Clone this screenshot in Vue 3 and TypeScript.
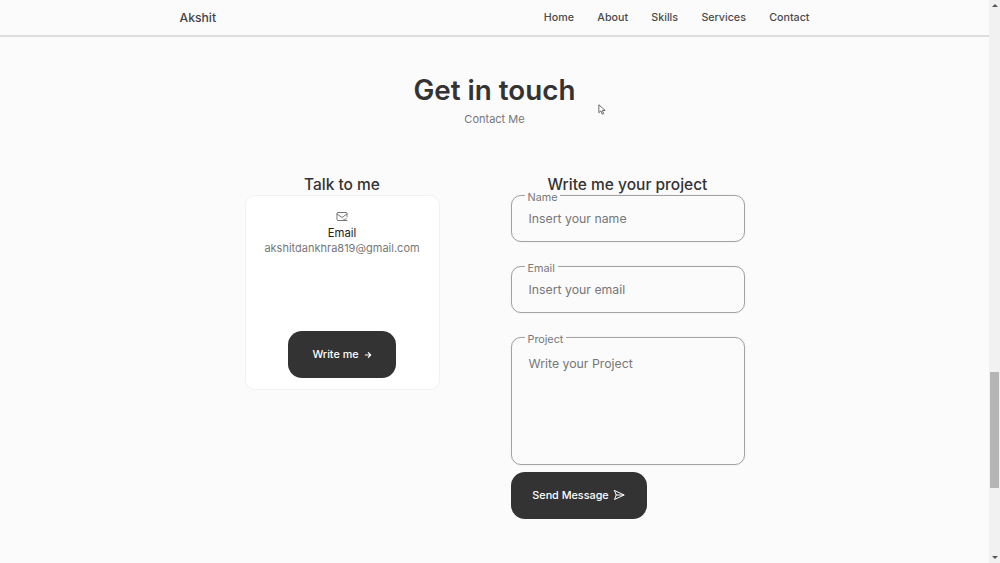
<script setup lang="ts">
const links: string[] = ['Home', 'About', 'Skills', 'Services', 'Contact']
</script>

<template>
  <div class="page">
    <div class="main">
      <header class="header">
        <nav class="nav">
          <a class="logo">Akshit</a>
          <ul class="menu">
            <li v-for="link in links" :key="link">{{ link }}</li>
          </ul>
        </nav>
      </header>

      <section class="section">
        <h1 class="title">Get in touch</h1>
        <p class="subtitle">Contact Me</p>

        <div class="columns">
          <div class="talk">
            <h2 class="col-title">Talk to me</h2>
            <div class="card">
              <svg class="mail" viewBox="0 0 24 20" fill="none" stroke="#666" stroke-width="1.8" stroke-linecap="round" stroke-linejoin="round">
                <path d="M22 10V4a2 2 0 0 0-2-2H4a2 2 0 0 0-2 2v12a2 2 0 0 0 2 2h18" />
                <path d="M2 5l10 7 10-7" />
                <path d="M15 15l2 2 4-4" />
              </svg>
              <h3 class="card-title">Email</h3>
              <span class="card-data">akshitdankhra819@gmail.com</span>
              <a class="btn write">
                Write me
                <svg class="arrow" viewBox="0 0 24 24" fill="none" stroke="#fff" stroke-width="3.4" stroke-linecap="round" stroke-linejoin="round">
                  <path d="M4 12h16M13 5l7 7-7 7" />
                </svg>
              </a>
            </div>
          </div>

          <div class="project">
            <h2 class="col-title">Write me your project</h2>
            <form class="form" @submit.prevent>
              <div class="field">
                <label class="label">Name</label>
                <input class="input" type="text" placeholder="Insert your name" />
              </div>
              <div class="field">
                <label class="label">Email</label>
                <input class="input" type="email" placeholder="Insert your email" />
              </div>
              <div class="field area">
                <label class="label">Project</label>
                <textarea class="input textarea" placeholder="Write your Project"></textarea>
              </div>
              <button class="btn send" type="submit">
                Send Message
                <svg class="plane" viewBox="0 0 24 24" fill="none" stroke="#fff" stroke-width="2" stroke-linecap="round" stroke-linejoin="round">
                  <path d="M3 3l19 9-19 9 3.5-9L3 3z" />
                  <path d="M6.5 12H22" />
                </svg>
              </button>
            </form>
          </div>
        </div>
      </section>

      <svg class="cursor" viewBox="0 0 10 14" fill="#fff" stroke="#444" stroke-width="1">
        <path d="M1 1v10l2.6-2.2L5.4 13l1.8-.8-1.8-4H9L1 1z" />
      </svg>
    </div>

    <aside class="scrollbar">
      <span class="tri up"></span>
      <span class="thumb"></span>
      <span class="tri down"></span>
    </aside>
  </div>
</template>

<style>
html, body {
  margin: 0;
  overflow: hidden;
  background: #fbfbfb;
}
</style>

<style scoped>
.page {
  display: flex;
  width: 1000px;
  height: 563px;
  overflow: hidden;
  background: #fbfbfb;
  font-family: Inter, "Noto Sans", sans-serif;
  color: #333;
}
.main {
  position: relative;
  flex: 1;
  min-width: 0;
}
.header {
  height: 35px;
  border-bottom: 2px solid #dedede;
}
.nav {
  display: flex;
  justify-content: space-between;
  align-items: center;
  width: 630px;
  height: 35px;
  margin: 0 auto;
}
.logo {
  font-size: 12.2px;
  font-weight: 500;
  color: #444;
}
.menu {
  display: flex;
  gap: 23.3px;
  margin: 0;
  padding: 0;
  list-style: none;
  font-size: 10.7px;
  font-weight: 500;
  color: #4a4a4a;
}
.section {
  display: flex;
  flex-direction: column;
  align-items: center;
}
.title {
  margin: 36px 0 0;
  font-size: 27.8px;
  line-height: 34px;
  font-weight: 600;
  color: #333;
}
.subtitle {
  margin: 2.5px 0 0;
  font-size: 11px;
  line-height: 18px;
  color: #777;
}
.columns {
  display: flex;
  gap: 71px;
  margin-top: 48px;
  align-items: flex-start;
}
.talk {
  width: 195px;
}
.project {
  width: 234px;
}
.col-title {
  margin: 0;
  height: 19px;
  font-size: 15.5px;
  line-height: 17px;
  font-weight: 500;
  text-align: center;
  color: #333;
}
.card {
  display: flex;
  flex-direction: column;
  align-items: center;
  box-sizing: border-box;
  height: 195px;
  padding-top: 15px;
  background: #fff;
  border: 1px solid #f1f1f1;
  border-radius: 10px;
}
.mail {
  width: 12px;
  height: 11px;
}
.card-title {
  margin: 4px 0 0;
  font-size: 11.3px;
  line-height: 15px;
  font-weight: 400;
  color: #222;
}
.card-data {
  font-size: 11px;
  line-height: 15px;
  white-space: nowrap;
  color: #777;
}
.btn {
  display: flex;
  align-items: center;
  justify-content: center;
  box-sizing: border-box;
  height: 47px;
  border: none;
  border-radius: 14px;
  background: #333;
  color: #fff;
  font-family: inherit;
  font-size: 10.8px;
  font-weight: 500;
}
.write {
  width: 108px;
  gap: 5px;
  margin-top: 75.5px;
}
.arrow {
  width: 8px;
  height: 8px;
}
.form {
  display: flex;
  flex-direction: column;
}
.field {
  position: relative;
  height: 47px;
  margin-bottom: 24px;
}
.field.area {
  height: 128px;
  margin-bottom: 7px;
}
.label {
  position: absolute;
  z-index: 1;
  top: -4px;
  left: 14px;
  padding: 0 3px;
  background: #fbfbfb;
  font-size: 10.8px;
  line-height: 13px;
  color: #777;
}
.input {
  display: block;
  box-sizing: border-box;
  width: 100%;
  height: 100%;
  padding: 0 17px;
  border: 1px solid #a3a3a3;
  border-radius: 10px;
  outline: none;
  background: transparent;
  box-shadow: 0 0 1px #c4c4c4;
  font-family: inherit;
  font-size: 12.3px;
  color: #333;
}
.input::placeholder {
  color: #777;
  opacity: 1;
}
.textarea {
  padding-top: 18px;
  resize: none;
}
.send {
  width: 136px;
  gap: 4px;
}
.plane {
  width: 12px;
  height: 12px;
}
.cursor {
  position: absolute;
  left: 598px;
  top: 104px;
  width: 8px;
  height: 11px;
}
.scrollbar {
  position: relative;
  display: flex;
  flex-direction: column;
  align-items: center;
  flex: none;
  width: 11px;
  background: #f1f1f1;
}
.thumb {
  width: 9px;
  height: 116px;
  margin-top: 372px;
  background: #b5b5b5;
}
.tri {
  width: 0;
  height: 0;
  border-left: 3px solid transparent;
  border-right: 3px solid transparent;
}
.tri.up {
  position: absolute;
  top: 4px;
  border-bottom: 3px solid #555;
}
.tri.down {
  position: absolute;
  bottom: 4px;
  border-top: 3px solid #555;
}
</style>
